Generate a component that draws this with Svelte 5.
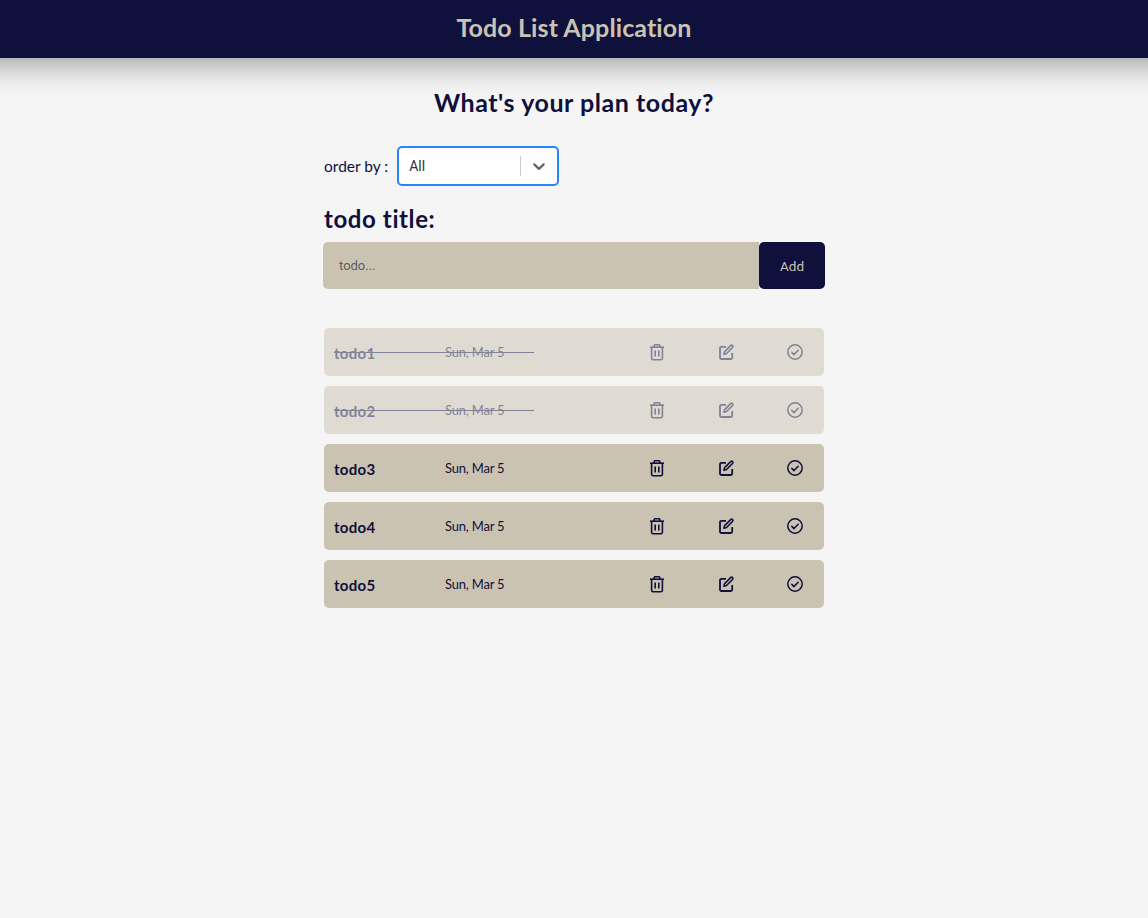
<script lang="ts">
	type Todo = { id: number; title: string; date: string; completed: boolean };

	const todos: Todo[] = [
		{ id: 1, title: "todo1", date: "Sun, Mar 5", completed: true },
		{ id: 2, title: "todo2", date: "Sun, Mar 5", completed: true },
		{ id: 3, title: "todo3", date: "Sun, Mar 5", completed: false },
		{ id: 4, title: "todo4", date: "Sun, Mar 5", completed: false },
		{ id: 5, title: "todo5", date: "Sun, Mar 5", completed: false },
	];

	let title = $state("");
</script>

<header class="header">
	<h1>Todo List Application</h1>
</header>

<main class="container">
	<h2 class="plan">What's your plan today?</h2>

	<div class="filter">
		<span class="filter-label">order by :</span>
		<div class="select">
			<span class="select-value">All</span>
			<span class="select-sep"></span>
			<span class="select-arrow">
				<svg width="20" height="20" viewBox="0 0 20 20" fill="currentColor">
					<path d="M4.516 7.548c0.436-0.446 1.043-0.481 1.576 0l3.908 3.747 3.908-3.747c0.533-0.481 1.141-0.446 1.574 0 0.436 0.445 0.408 1.197 0 1.615-0.406 0.418-4.695 4.502-4.695 4.502-0.217 0.223-0.502 0.335-0.787 0.335s-0.57-0.112-0.789-0.335c0 0-4.287-4.084-4.695-4.502s-0.436-1.17 0-1.615z" />
				</svg>
			</span>
		</div>
	</div>

	<form class="todo-form" onsubmit={(e) => e.preventDefault()}>
		<label class="form-label" for="todo-title">todo title:</label>
		<div class="form-row">
			<input id="todo-title" type="text" placeholder="todo..." bind:value={title} />
			<button type="submit">Add</button>
		</div>
	</form>

	<ul class="list">
		{#each todos as todo (todo.id)}
			<li class="item" class:completed={todo.completed}>
				<div class="info">
					<span class="name">{todo.title}</span>
					<span class="date">{todo.date}</span>
				</div>
				<div class="actions">
					<button class="icon" aria-label="delete">
						<svg width="18" height="18" viewBox="0 0 18 18" fill="none" stroke="currentColor" stroke-width="1.6" stroke-linejoin="round">
							<path d="M2 4.2h14" />
							<path d="M6.2 4V2.6a.8.8 0 0 1 .8-.8h4a.8.8 0 0 1 .8.8V4" />
							<path d="M3.6 4.2v11a1.5 1.5 0 0 0 1.5 1.5h7.8a1.5 1.5 0 0 0 1.5-1.5v-11" />
							<path d="M7.2 7.5v6M10.8 7.5v6" />
						</svg>
					</button>
					<button class="icon" aria-label="edit">
						<svg width="18" height="18" viewBox="0 0 18 18" fill="none" stroke="currentColor" stroke-width="1.8" stroke-linejoin="round">
							<path d="M9 3.8H4.4A1.4 1.4 0 0 0 3 5.2v9.4A1.4 1.4 0 0 0 4.4 16h9.4a1.4 1.4 0 0 0 1.4-1.4V10" />
							<path stroke-width="1.6" d="M13.6 2.6a1.3 1.3 0 0 1 1.9 1.9l-6 6-2.6.7.7-2.6z" />
						</svg>
					</button>
					<button class="icon" aria-label="complete">
						<svg width="18" height="18" viewBox="0 0 18 18" fill="none" stroke="currentColor" stroke-width="1.5" stroke-linecap="round" stroke-linejoin="round">
							<circle cx="9" cy="9" r="7.2" />
							<path d="M5.8 9.4l2.2 2.2 4.2-4.4" />
						</svg>
					</button>
				</div>
			</li>
		{/each}
	</ul>
</main>

<style>
	:global(body) {
		margin: 0;
		background: #f5f5f5;
		color: #0f103c;
		font-family: Lato, "Open Sans", sans-serif;
	}

	.header {
		height: 58px;
		box-sizing: border-box;
		padding-bottom: 4px;
		display: flex;
		align-items: center;
		justify-content: center;
		background: #0f103c;
		box-shadow: 0 -35px 30px 40px rgba(0, 0, 0, 0.4);
	}

	.header h1 {
		margin: 0;
		font-size: 25px;
		letter-spacing: 0.1px;
		font-weight: 700;
		color: #cbc3b2;
	}

	.container {
		width: 500px;
		margin: 0 auto;
	}

	.plan {
		margin: 0;
		padding-top: 29px;
		height: 58px;
		box-sizing: border-box;
		font-size: 25px;
		letter-spacing: 0.55px;
		line-height: 30px;
		font-weight: 700;
		text-align: center;
	}

	.filter {
		display: flex;
		align-items: center;
		gap: 9px;
		margin-top: 30px;
		height: 40px;
	}

	.filter-label {
		font-size: 15.5px;
	}

	.select {
		width: 162px;
		height: 40px;
		box-sizing: border-box;
		display: flex;
		align-items: center;
		background: #fff;
		border: 2px solid #2684ff;
		border-radius: 5px;
	}

	.select-value {
		flex: 1;
		padding-left: 10px;
		font-family: Roboto, sans-serif;
		font-size: 14px;
		color: #333;
	}

	.select-sep {
		width: 1px;
		height: 20px;
		background: #ccc;
	}

	.select-arrow {
		display: flex;
		padding: 0 8px;
		color: #666;
	}

	.form-label {
		display: block;
		margin-top: 19px;
		height: 37px;
		font-size: 24px;
		letter-spacing: 0.6px;
		line-height: 28px;
		font-weight: 700;
	}

	.form-row {
		display: flex;
		margin-left: -1px;
		margin-right: -1px;
		height: 47px;
	}

	.form-row input {
		flex: 1;
		min-width: 0;
		padding: 0 16px;
		border: 0;
		outline: 0;
		background: #cbc3b2;
		border-radius: 5px 0 0 5px;
		font-family: Roboto, sans-serif;
		font-size: 13px;
		color: #0f103c;
	}

	.form-row input::placeholder {
		color: #5f5a62;
	}

	.form-row button {
		width: 66px;
		border: 0;
		background: #0f103c;
		border-radius: 5px;
		color: #cbc3b2;
		font-family: Roboto, sans-serif;
		font-size: 13.5px;
		cursor: pointer;
	}

	.list {
		list-style: none;
		margin: 39px 0 0;
		padding: 0;
		display: flex;
		flex-direction: column;
		gap: 10px;
	}

	.item {
		height: 48px;
		box-sizing: border-box;
		display: flex;
		align-items: center;
		justify-content: space-between;
		padding: 0 10px;
		background: #cbc3b2;
		border-radius: 5px;
	}

	.item.completed {
		opacity: 0.5;
	}

	.info {
		position: relative;
		width: 200px;
		display: flex;
		align-items: center;
	}

	.completed .info::after {
		content: "";
		position: absolute;
		left: 0;
		right: 0;
		top: 50%;
		height: 1px;
		background: currentColor;
	}

	.name {
		width: 111px;
		padding-top: 1px;
		font-size: 15px;
		letter-spacing: 0.3px;
		font-weight: 700;
	}

	.date {
		font-size: 13px;
		letter-spacing: -0.2px;
	}

	.actions {
		display: flex;
		gap: 51px;
		padding-right: 10px;
	}

	.icon {
		display: flex;
		padding: 0;
		border: 0;
		background: none;
		color: #0f103c;
		cursor: pointer;
	}
</style>
